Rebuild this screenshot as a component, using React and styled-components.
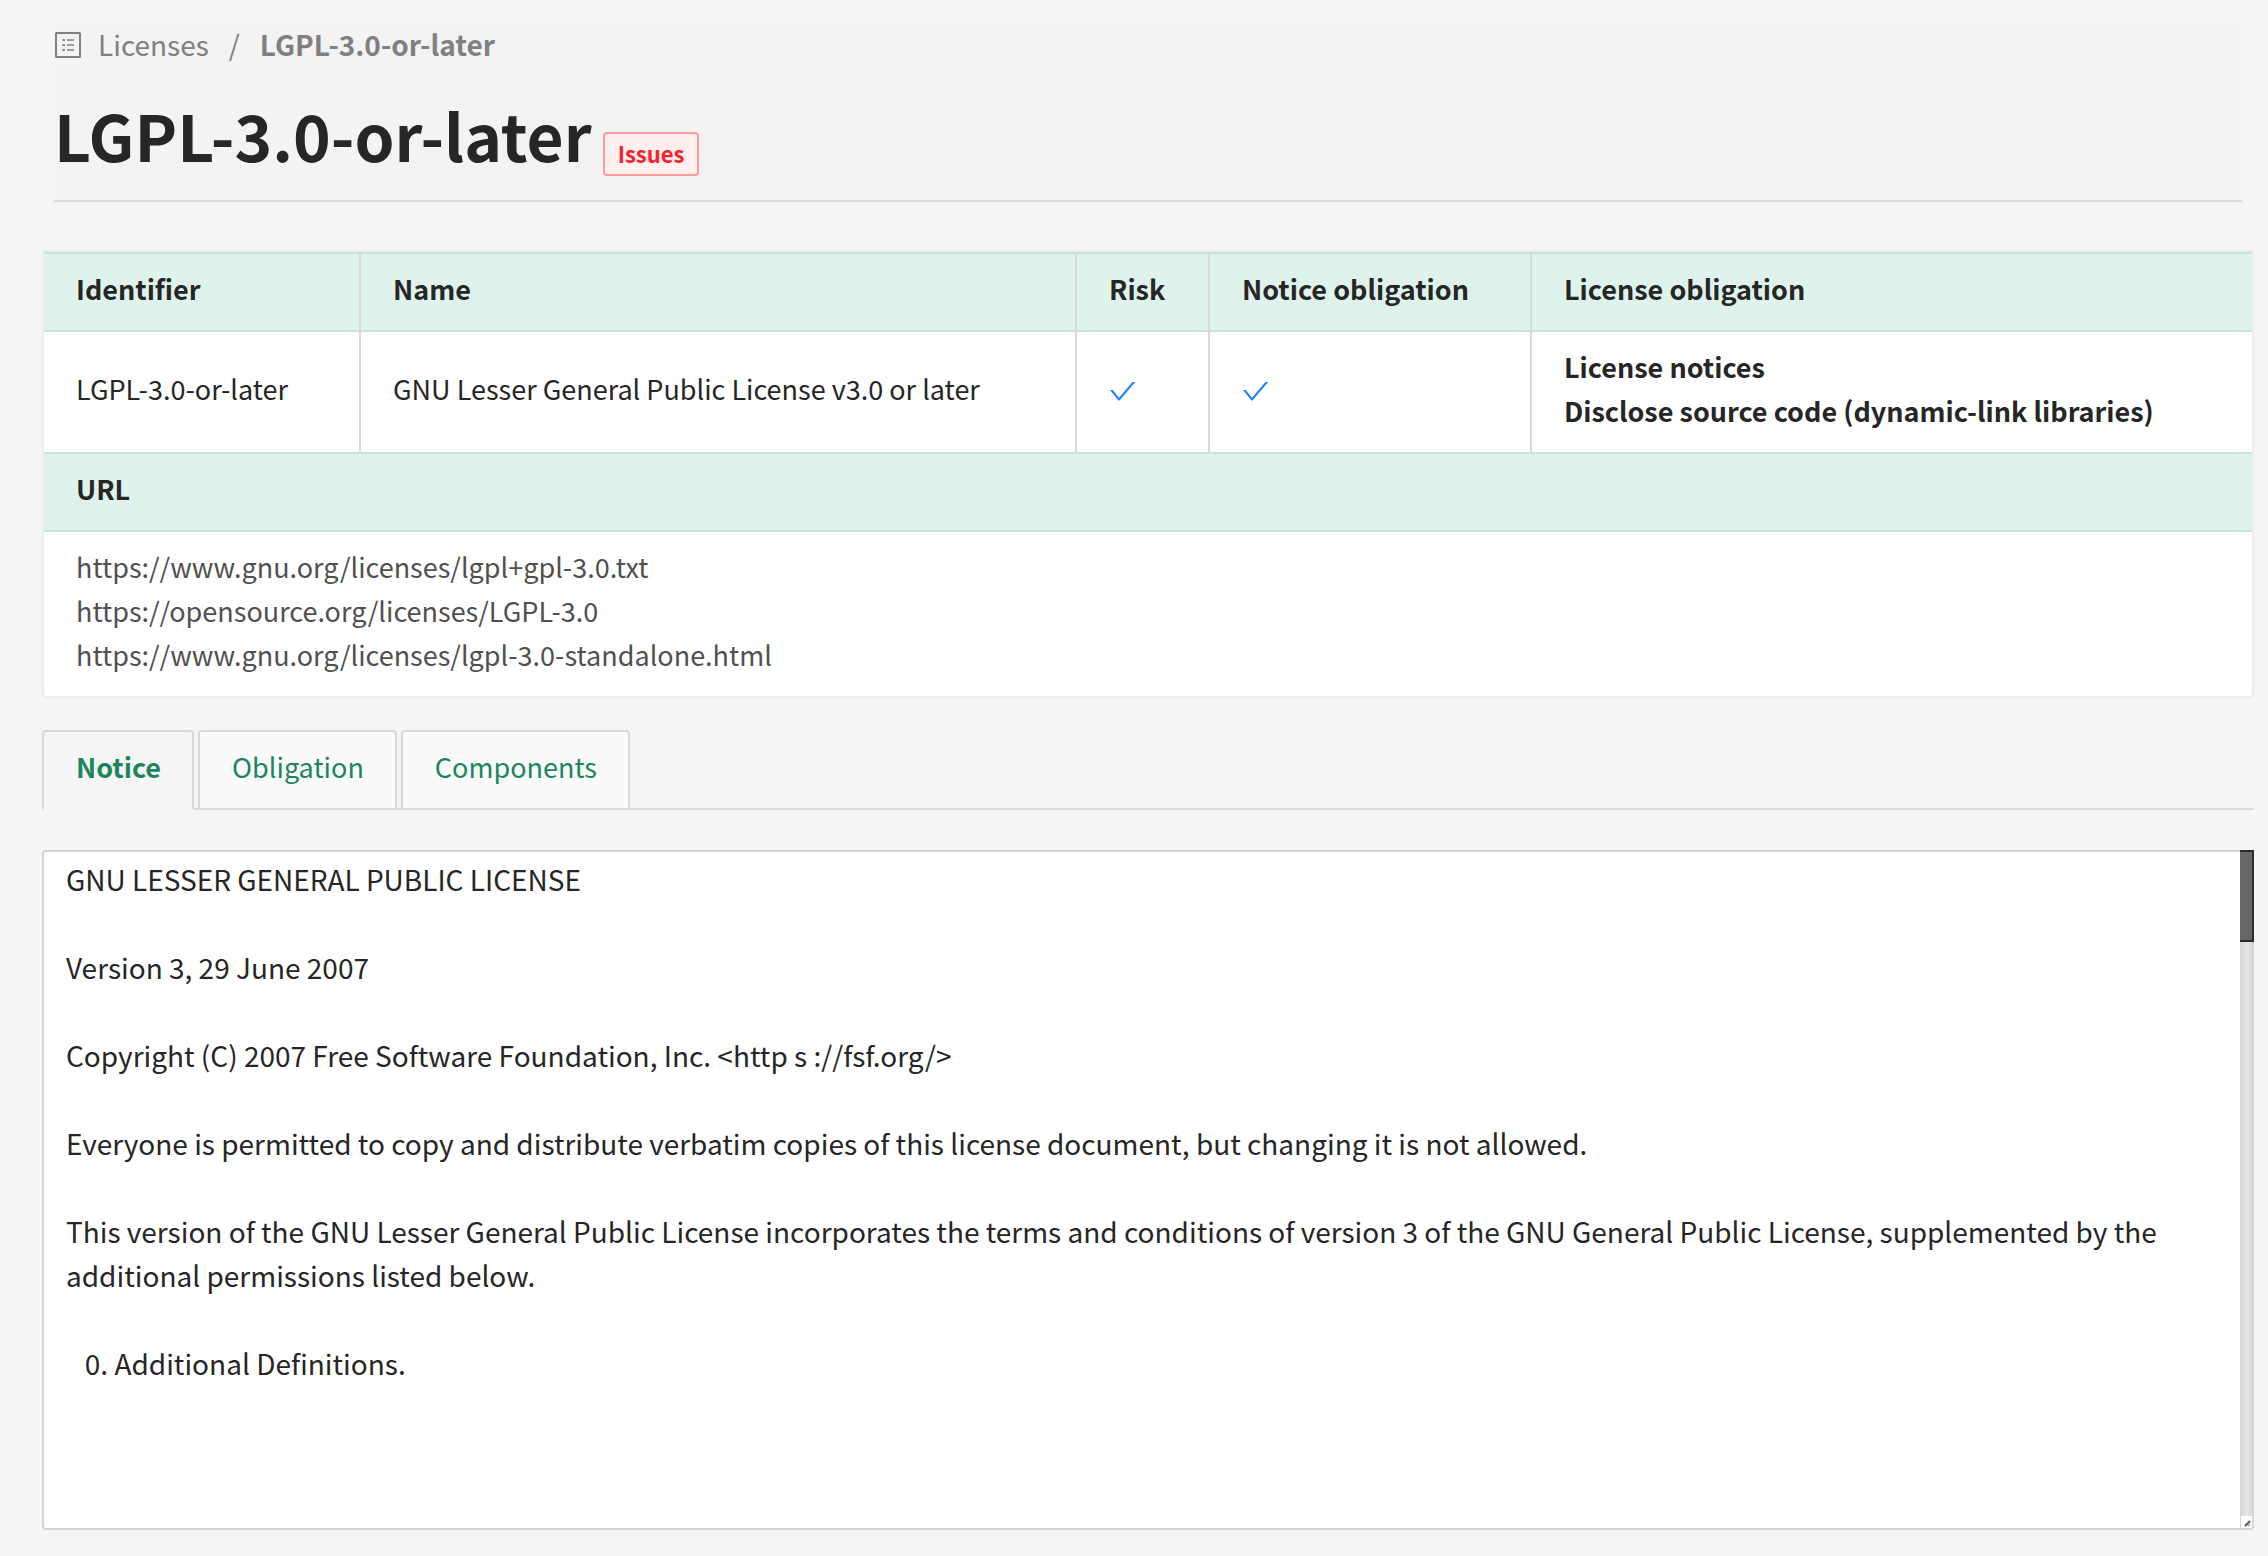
import React from "react";
import styled, { createGlobalStyle } from "styled-components";

const GlobalStyle = createGlobalStyle`
  * {
    box-sizing: border-box;
  }

  body {
    margin: 0;
    background: #f5f5f5;
    color: #262626;
    font-family: "Noto Sans CJK KR", "Noto Sans", sans-serif;
    font-size: 28px;
    line-height: 44px;
  }
`;

const Page = styled.main`
  padding: 24px 14px 24px 42px;
`;

const Header = styled.header`
  margin: 0 12px 48px;
  padding-bottom: 22px;
  background: #f3f3f3;
  border-bottom: 2px solid #d9d9d9;
`;

const Breadcrumb = styled.nav`
  display: flex;
  align-items: center;
  color: #808080;
  line-height: 40px;
`;

const Crumb = styled.a`
  display: flex;
  align-items: center;
  gap: 16px;
  color: inherit;
  text-decoration: none;
`;

const Slash = styled.span`
  margin: 0 20px;
`;

const TitleRow = styled.div`
  display: flex;
  align-items: flex-end;
  gap: 11px;
  margin-top: 26px;
`;

const Title = styled.h1`
  margin: 0;
  font-size: 64px;
  line-height: 88px;
`;

const Tag = styled.span`
  margin-bottom: 2px;
  padding: 0 13px 2px;
  border: 2px solid #ff9c99;
  border-radius: 4px;
  background: #ffefee;
  color: #f5222d;
  font-size: 22px;
  font-weight: 700;
  line-height: 38px;
`;

const Card = styled.section`
  border: 2px solid #ededed;
  border-radius: 4px;
  background: #fff;
`;

const Table = styled.table`
  width: 100%;
  border-spacing: 0;
  table-layout: fixed;
  font-size: 27px;
`;

const Th = styled.th`
  padding: 13px 32px 19px;
  border: solid #c8e4da;
  border-width: 2px 0;
  border-right: ${(props) => (props.$last ? "0" : "2px solid #d9d9d9")};
  background: #dff3ed;
  text-align: left;
`;

const Td = styled.td`
  padding: 13px 32px 19px;
  border-right: ${(props) => (props.$last ? "0" : "2px solid #d9d9d9")};
  font-weight: ${(props) => (props.$bold ? 700 : 400)};
`;

const UrlLink = styled.a`
  display: block;
  color: #505050;
  text-decoration: none;
`;

const Check = styled.svg`
  display: block;
  width: 28px;
  height: 28px;
`;

const Tabs = styled.div`
  display: flex;
  gap: 4px;
  margin-top: 32px;
  border-bottom: 2px solid #d9d9d9;
`;

const Tab = styled.button`
  margin-bottom: -2px;
  padding: 13px 31px 19px 32px;
  border: 2px solid #d9d9d9;
  border-bottom-color: ${(props) => (props.$active ? "#f5f5f5" : "#d9d9d9")};
  border-radius: 4px 4px 0 0;
  background: ${(props) => (props.$active ? "#f5f5f5" : "#fafafa")};
  color: #1b855e;
  font: inherit;
  font-size: 27px;
  font-weight: ${(props) => (props.$active ? 700 : 400)};
`;

const NoticeFrame = styled.div`
  display: flex;
  height: 680px;
  margin-top: 40px;
  border: 2px solid #d4d4d4;
  border-radius: 4px;
  background: #fff;
`;

const NoticeText = styled.textarea`
  flex: 1;
  padding: 5px 22px;
  border: 0;
  outline: 0;
  resize: none;
  overflow: hidden;
  background: transparent;
  color: inherit;
  font: inherit;
`;

const ScrollTrack = styled.div`
  display: flex;
  flex-direction: column;
  justify-content: space-between;
  width: 14px;
  margin: -2px -2px 0 0;
  background: linear-gradient(90deg, #d2d2d2, #e6e6e6 50%, #d2d2d2);
`;

const ScrollThumb = styled.div`
  height: 92px;
  border: 2px solid #2c2c2c;
  border-left: 0;
  background: #666;
`;

const Grip = styled.svg`
  display: block;
  width: 11px;
  height: 12px;
  margin-left: 1px;
  background: #fff;
`;

const ListIcon = () => (
  <svg width="28" height="28" viewBox="0 0 28 28" aria-hidden="true">
    <rect x="2" y="3" width="24" height="24" rx="0.5" fill="none" stroke="currentColor" strokeWidth="2" />
    <path d="M13 10h7M13 15h7M13 20h7" stroke="currentColor" strokeWidth="1.7" />
    <path d="M8.5 10h2.4M8.5 15h2.4M8.5 20h2.4" stroke="currentColor" strokeWidth="2.2" />
  </svg>
);

const CheckIcon = () => (
  <Check viewBox="0 0 28 28" role="img" aria-label="Yes">
    <path d="M1 15h2.8l6.2 7.8L23.4 7h2.8L11 25q-1 1-2 0z" fill="#2185f8" />
  </Check>
);

const columns = [
  { title: "Identifier", width: "317px" },
  { title: "Name", width: "716px" },
  { title: "Risk", width: "133px" },
  { title: "Notice obligation", width: "322px" },
  { title: "License obligation" },
];

const urls = [
  "https://www.gnu.org/licenses/lgpl+gpl-3.0.txt",
  "https://opensource.org/licenses/LGPL-3.0",
  "https://www.gnu.org/licenses/lgpl-3.0-standalone.html",
];

const tabs = ["Notice", "Obligation", "Components"];

const notice = `GNU LESSER GENERAL PUBLIC LICENSE

Version 3, 29 June 2007

Copyright (C) 2007 Free Software Foundation, Inc. <http s ://fsf.org/>

Everyone is permitted to copy and distribute verbatim copies of this license document, but changing it is not allowed.

This version of the GNU Lesser General Public License incorporates the terms and conditions of version 3 of the GNU General Public License, supplemented by the additional permissions listed below.

   0. Additional Definitions.
`;

const App = () => (
  <Page>
    <GlobalStyle />
    <Header>
      <Breadcrumb aria-label="Breadcrumb">
        <Crumb href="#licenses">
          <ListIcon />
          Licenses
        </Crumb>
        <Slash>/</Slash>
        <strong>LGPL-3.0-or-later</strong>
      </Breadcrumb>
      <TitleRow>
        <Title>LGPL-3.0-or-later</Title>
        <Tag>Issues</Tag>
      </TitleRow>
    </Header>

    <Card>
      <Table>
        <colgroup>
          {columns.map((col) => (
            <col key={col.title} style={{ width: col.width }} />
          ))}
        </colgroup>
        <tbody>
          <tr>
            {columns.map((col, i) => (
              <Th key={col.title} scope="col" $last={i === columns.length - 1}>
                {col.title}
              </Th>
            ))}
          </tr>
          <tr>
            <Td>LGPL-3.0-or-later</Td>
            <Td>GNU Lesser General Public License v3.0 or later</Td>
            <Td><CheckIcon /></Td>
            <Td><CheckIcon /></Td>
            <Td $bold $last>
              License notices
              <br />
              Disclose source code (dynamic-link libraries)
            </Td>
          </tr>
          <tr>
            <Th colSpan={5} $last>URL</Th>
          </tr>
          <tr>
            <Td colSpan={5} $last>
              {urls.map((url) => (
                <UrlLink key={url} href={url}>{url}</UrlLink>
              ))}
            </Td>
          </tr>
        </tbody>
      </Table>
    </Card>

    <Tabs role="tablist">
      {tabs.map((tab, i) => (
        <Tab key={tab} type="button" role="tab" aria-selected={i === 0} $active={i === 0}>
          {tab}
        </Tab>
      ))}
    </Tabs>

    <NoticeFrame>
      <NoticeText aria-label="Notice" readOnly spellCheck={false} defaultValue={notice} />
      <ScrollTrack>
        <ScrollThumb />
        <Grip viewBox="0 0 11 12">
          <path d="M4 10l5-5" stroke="#555" strokeWidth="2" />
          <path d="M7 10l2-2" stroke="#aaa" strokeWidth="2" />
        </Grip>
      </ScrollTrack>
    </NoticeFrame>
  </Page>
);

export default App;
